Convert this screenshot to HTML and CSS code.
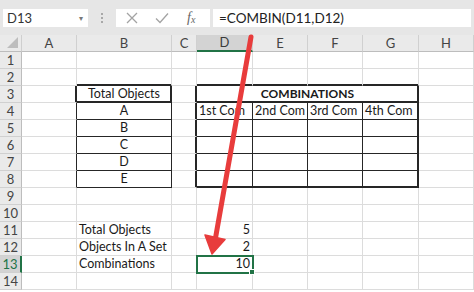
FILE: index.html
```html
<!DOCTYPE html>
<html>
<head>
<meta charset="utf-8">
<link rel="stylesheet" href="styles.css">
</head>
<body>
<div class="app">
  <div class="toolbar">
    <div class="namebox"><span>D13</span><span class="caret">&#9662;</span></div>
    <div class="grip"><i></i><i></i><i></i></div>
    <div class="btns">
      <svg class="ico" width="14" height="14" viewBox="0 0 14 14"><path d="M2 2L12 12M12 2L2 12" stroke="#a3a3a3" stroke-width="1.3" fill="none"/></svg>
      <svg class="ico" width="16" height="14" viewBox="0 0 16 14"><path d="M2 7.5L6 11.5L14 2.5" stroke="#a3a3a3" stroke-width="1.3" fill="none"/></svg>
      <span class="fx">f<sub>x</sub></span>
    </div>
    <div class="formula">=COMBIN(D11,D12)</div>
  </div>

  <div class="sheet">
    <div class="corner"></div>
    <div class="ch">A</div><div class="ch">B</div><div class="ch">C</div><div class="ch selh">D</div><div class="ch">E</div><div class="ch">F</div><div class="ch">G</div><div class="ch">H</div>

    <div class="rh">1</div><div class="c"></div><div class="c"></div><div class="c"></div><div class="c"></div><div class="c"></div><div class="c"></div><div class="c"></div><div class="c"></div>

    <div class="rh">2</div><div class="c"></div><div class="c tb"></div><div class="c"></div><div class="c tb"></div><div class="c tb"></div><div class="c tb"></div><div class="c tb"></div><div class="c"></div>

    <div class="rh">3</div><div class="c tr"></div><div class="c tr tb ctr">Total Objects</div><div class="c tr"></div><div class="c span4 tr tb ctr bold">COMBINATIONS</div><div class="c"></div>

    <div class="rh">4</div><div class="c dr"></div><div class="c dr db ctr">A</div><div class="c tr"></div><div class="c dr db clip">1st Com</div><div class="c dr db clip">2nd Com</div><div class="c dr db clip">3rd Com</div><div class="c tr db clip">4th Com</div><div class="c"></div>

    <div class="rh">5</div><div class="c dr"></div><div class="c dr db ctr">B</div><div class="c tr"></div><div class="c dr db"></div><div class="c dr db"></div><div class="c dr db"></div><div class="c tr db"></div><div class="c"></div>

    <div class="rh">6</div><div class="c dr"></div><div class="c dr db ctr">C</div><div class="c tr"></div><div class="c dr db"></div><div class="c dr db"></div><div class="c dr db"></div><div class="c tr db"></div><div class="c"></div>

    <div class="rh">7</div><div class="c dr"></div><div class="c dr db ctr">D</div><div class="c tr"></div><div class="c dr db"></div><div class="c dr db"></div><div class="c dr db"></div><div class="c tr db"></div><div class="c"></div>

    <div class="rh">8</div><div class="c dr"></div><div class="c dr db ctr">E</div><div class="c tr"></div><div class="c dr tb"></div><div class="c dr tb"></div><div class="c dr tb"></div><div class="c tr tb"></div><div class="c"></div>

    <div class="rh">9</div><div class="c"></div><div class="c"></div><div class="c"></div><div class="c"></div><div class="c"></div><div class="c"></div><div class="c"></div><div class="c"></div>

    <div class="rh">10</div><div class="c"></div><div class="c"></div><div class="c"></div><div class="c"></div><div class="c"></div><div class="c"></div><div class="c"></div><div class="c"></div>

    <div class="rh">11</div><div class="c"></div><div class="c lft">Total Objects</div><div class="c"></div><div class="c rgt">5</div><div class="c"></div><div class="c"></div><div class="c"></div><div class="c"></div>

    <div class="rh">12</div><div class="c"></div><div class="c lft">Objects In A Set</div><div class="c"></div><div class="c rgt">2</div><div class="c"></div><div class="c"></div><div class="c"></div><div class="c"></div>

    <div class="rh selr">13</div><div class="c"></div><div class="c lft">Combinations</div><div class="c"></div><div class="c rgt sel">10</div><div class="c"></div><div class="c"></div><div class="c"></div><div class="c"></div>

    <div class="rh">14</div><div class="c"></div><div class="c"></div><div class="c"></div><div class="c"></div><div class="c"></div><div class="c"></div><div class="c"></div><div class="c"></div>
  </div>

  <svg class="arrow" width="474" height="292" viewBox="0 0 474 292">
    <line x1="251" y1="37" x2="215.5" y2="238" stroke="#e83c3c" stroke-width="5" stroke-linecap="round"/>
    <polygon points="205,235 225,239.5 212,254" fill="#e83c3c" stroke="#e83c3c" stroke-width="1.5" stroke-linejoin="round"/>
  </svg>
</div>
</body>
</html>
```

FILE: styles.css
```css
html, body {
  margin: 0;
  padding: 0;
  background: #ffffff;
}
.app {
  position: relative;
  width: 474px;
  height: 292px;
  overflow: hidden;
  font-family: Lato, "Open Sans", sans-serif;
}
.toolbar {
  height: 35px;
  background: #e6e6e6;
  display: flex;
  align-items: flex-start;
  padding-top: 9px;
  box-sizing: border-box;
}
.namebox {
  margin-left: 3px;
  width: 85px;
  height: 18px;
  background: #fff;
  display: flex;
  align-items: center;
  justify-content: space-between;
  padding: 0 5px 0 4px;
  box-sizing: border-box;
  font-size: 13px;
  color: #333;
}
.caret {
  font-size: 8px;
  color: #777;
}
.grip {
  width: 28px;
  height: 18px;
  display: flex;
  flex-direction: column;
  align-items: center;
  justify-content: center;
  gap: 2px;
}
.grip i {
  display: block;
  width: 2px;
  height: 2px;
  background: #a8a8a8;
}
.btns {
  width: 94px;
  height: 18px;
  background: #fff;
  display: flex;
  align-items: center;
  padding-left: 9px;
  box-sizing: border-box;
  gap: 15px;
}
.fx {
  font-family: "Liberation Serif", serif;
  font-style: italic;
  font-size: 14px;
  color: #666;
  margin-left: 2px;
  line-height: 1;
}
.fx sub {
  font-size: 10px;
  vertical-align: -1px;
}
.formula {
  margin-left: 3px;
  flex: 1;
  height: 18px;
  background: #fff;
  margin-right: 3px;
  font-size: 13.5px;
  color: #222;
  padding-left: 6px;
  line-height: 18px;
}
.sheet {
  display: grid;
  grid-template-columns: 22px 55px 95px 25px 56px 55px 55px 56px 55px;
  grid-template-rows: repeat(15, 17px);
  font-size: 12.5px;
  color: #1a1a1a;
}
.corner {
  background: #eaeaea;
  border-right: 1px solid #cfcfcf;
  border-bottom: 1px solid #bdbdbd;
  position: relative;
}
.corner::after {
  content: "";
  position: absolute;
  right: 3px;
  bottom: 3px;
  border-style: solid;
  border-width: 0 0 11px 11px;
  border-color: transparent transparent #bdbdbd transparent;
}
.ch {
  background: #eaeaea;
  border-right: 1px solid #d0d0d0;
  border-bottom: 1px solid #bdbdbd;
  text-align: center;
  line-height: 16px;
  color: #444;
  font-size: 13px;
}
.ch.selh {
  background: #d3d3d3;
  border-bottom: 2px solid #217346;
  line-height: 15px;
  color: #3a3a3a;
}
.rh {
  background: #eaeaea;
  border-right: 1px solid #bdbdbd;
  border-bottom: 1px solid #d0d0d0;
  text-align: center;
  line-height: 16px;
  color: #444;
  font-size: 13px;
}
.rh.selr {
  background: #d3d3d3;
  border-right: 2px solid #217346;
  color: #217346;
}
.c {
  --sr: 0px;
  --sb: 0px;
  border-right: 1px solid #dcdcdc;
  border-bottom: 1px solid #dcdcdc;
  line-height: 16px;
  white-space: nowrap;
  box-shadow: inset calc(-1 * var(--sr)) 0 0 #262626, inset 0 calc(-1 * var(--sb)) 0 #262626;
}
.dr { border-right-color: #262626; }
.db { border-bottom-color: #262626; }
.tr { border-right-color: #262626; --sr: 1px; }
.tb { border-bottom-color: #262626; --sb: 1px; }
.span4 { grid-column: span 4; }
.ctr { text-align: center; }
.bold { font-weight: bold; font-size: 12px; }
.clip {
  overflow: hidden;
  padding-left: 2px;
}
.lft { padding-left: 2px; }
.rgt { text-align: right; padding-right: 2px; }
.sel {
  position: relative;
  outline: 2px solid #217346;
  outline-offset: -1px;
}
.sel::after {
  content: "";
  position: absolute;
  right: -3px;
  bottom: -3px;
  width: 4px;
  height: 4px;
  background: #217346;
  border: 1px solid #fff;
}
.arrow {
  position: absolute;
  left: 0;
  top: 0;
  pointer-events: none;
}
```
